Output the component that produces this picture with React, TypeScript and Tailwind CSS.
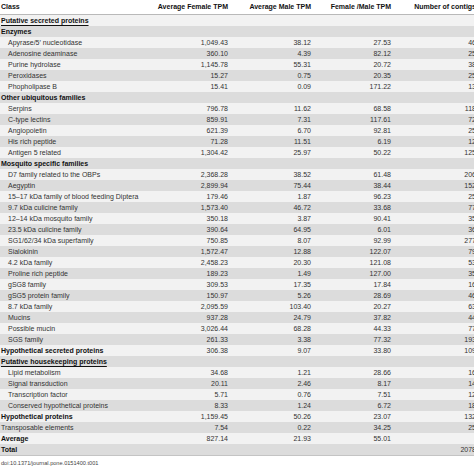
import React from "react";

type Row = {
  label: string;
  kind: "head" | "sub" | "plain";
  underline?: boolean;
  f?: string;
  m?: string;
  r?: string;
  c?: string;
};

const rows: Row[] = [
  { label: "Putative secreted proteins", kind: "head", underline: true },
  { label: "Enzymes", kind: "head" },
  { label: "Apyrase/5′ nucleotidase", kind: "sub", f: "1,049.43", m: "38.12", r: "27.53", c: "46" },
  { label: "Adenosine deaminase", kind: "sub", f: "360.10", m: "4.39", r: "82.12", c: "25" },
  { label: "Purine hydrolase", kind: "sub", f: "1,145.78", m: "55.31", r: "20.72", c: "38" },
  { label: "Peroxidases", kind: "sub", f: "15.27", m: "0.75", r: "20.35", c: "25" },
  { label: "Phopholipase B", kind: "sub", f: "15.41", m: "0.09", r: "171.22", c: "13" },
  { label: "Other ubiquitous families", kind: "head" },
  { label: "Serpins", kind: "sub", f: "796.78", m: "11.62", r: "68.58", c: "118" },
  { label: "C-type lectins", kind: "sub", f: "859.91", m: "7.31", r: "117.61", c: "72" },
  { label: "Angiopoietin", kind: "sub", f: "621.39", m: "6.70", r: "92.81", c: "25" },
  { label: "His rich peptide", kind: "sub", f: "71.28", m: "11.51", r: "6.19", c: "12" },
  { label: "Antigen 5 related", kind: "sub", f: "1,304.42", m: "25.97", r: "50.22", c: "125" },
  { label: "Mosquito specific families", kind: "head" },
  { label: "D7 family related to the OBPs", kind: "sub", f: "2,368.28", m: "38.52", r: "61.48", c: "206" },
  { label: "Aegyptin", kind: "sub", f: "2,899.94", m: "75.44", r: "38.44", c: "152" },
  { label: "15–17 kDa family of blood feeding Diptera", kind: "sub", f: "179.46", m: "1.87", r: "96.23", c: "25" },
  { label: "9.7 kDa culicine family", kind: "sub", f: "1,573.40", m: "46.72", r: "33.68", c: "77" },
  { label: "12–14 kDa mosquito family", kind: "sub", f: "350.18", m: "3.87", r: "90.41", c: "35" },
  { label: "23.5 kDa culicine family", kind: "sub", f: "390.64", m: "64.95", r: "6.01", c: "36" },
  { label: "SG1/62/34 kDa superfamily", kind: "sub", f: "750.85", m: "8.07", r: "92.99", c: "277" },
  { label: "Sialokinin", kind: "sub", f: "1,572.47", m: "12.88", r: "122.07", c: "79" },
  { label: "4.2 kDa family", kind: "sub", f: "2,458.23", m: "20.30", r: "121.08", c: "53" },
  { label: "Proline rich peptide", kind: "sub", f: "189.23", m: "1.49", r: "127.00", c: "35" },
  { label: "gSG8 family", kind: "sub", f: "309.53", m: "17.35", r: "17.84", c: "16" },
  { label: "gSG5 protein family", kind: "sub", f: "150.97", m: "5.26", r: "28.69", c: "46" },
  { label: "8.7 kDa family", kind: "sub", f: "2,095.59", m: "103.40", r: "20.27", c: "63" },
  { label: "Mucins", kind: "sub", f: "937.28", m: "24.79", r: "37.82", c: "44" },
  { label: "Possible mucin", kind: "sub", f: "3,026.44", m: "68.28", r: "44.33", c: "77" },
  { label: "SGS family", kind: "sub", f: "261.33", m: "3.38", r: "77.32", c: "193" },
  { label: "Hypothetical secreted proteins", kind: "head", f: "306.38", m: "9.07", r: "33.80", c: "109" },
  { label: "Putative housekeeping proteins", kind: "head", underline: true },
  { label: "Lipid metabolism", kind: "sub", f: "34.68", m: "1.21", r: "28.66", c: "16" },
  { label: "Signal transduction", kind: "sub", f: "20.11", m: "2.46", r: "8.17", c: "14" },
  { label: "Transcription factor", kind: "sub", f: "5.71", m: "0.76", r: "7.51", c: "12" },
  { label: "Conserved hypothetical proteins", kind: "sub", f: "8.33", m: "1.24", r: "6.72", c: "18" },
  { label: "Hypothetical proteins", kind: "head", f: "1,159.45", m: "50.26", r: "23.07", c: "132" },
  { label: "Transposable elements", kind: "plain", f: "7.54", m: "0.22", r: "34.25", c: "25" },
  { label: "Average", kind: "head", f: "827.14", m: "21.93", r: "55.01" },
  { label: "Total", kind: "head", c: "2078" },
];

const cols = "grid grid-cols-[148px_80px_83px_80px_85px] w-[476px]";

export default function App() {
  return (
    <div className="w-[474px] h-[467px] overflow-hidden bg-white font-['Liberation_Sans',Arial,sans-serif] text-[7px] leading-none">
      <div className={`${cols} h-[15px] items-center border-b border-[#b9b9b9] font-bold text-[#111] pb-[1px]`}>
        <div className="pl-[1px]">Class</div>
        <div className="text-right">Average Female TPM</div>
        <div className="text-right">Average Male TPM</div>
        <div className="text-right">Female /Male TPM</div>
        <div className="text-right whitespace-nowrap">Number of contigs</div>
      </div>
      <div className="border-b border-[#c4c4c4]">
        {rows.map((row, i) => (
          <div
            key={row.label}
            className={`${cols} h-[11px] items-center text-[#333] ${i % 2 === 0 ? "bg-[#f2f2f2]" : "bg-[#dcdcdc]"}`}
          >
            <div
              className={`whitespace-nowrap ${row.kind === "sub" ? "pl-[8px]" : "pl-[1px]"} ${
                row.kind === "head" ? "font-bold text-[#111]" : ""
              } ${row.underline ? "underline decoration-[0.6px] underline-offset-[1.5px]" : ""}`}
            >
              {row.label}
            </div>
            <div className="text-right">{row.f}</div>
            <div className="text-right">{row.m}</div>
            <div className="text-right">{row.r}</div>
            <div className="text-right">{row.c}</div>
          </div>
        ))}
      </div>
      <div className="pl-[1px] pt-[5px] text-[5.6px] text-[#444] whitespace-nowrap">doi:10.1371/journal.pone.0151400.t001</div>
    </div>
  );
}
